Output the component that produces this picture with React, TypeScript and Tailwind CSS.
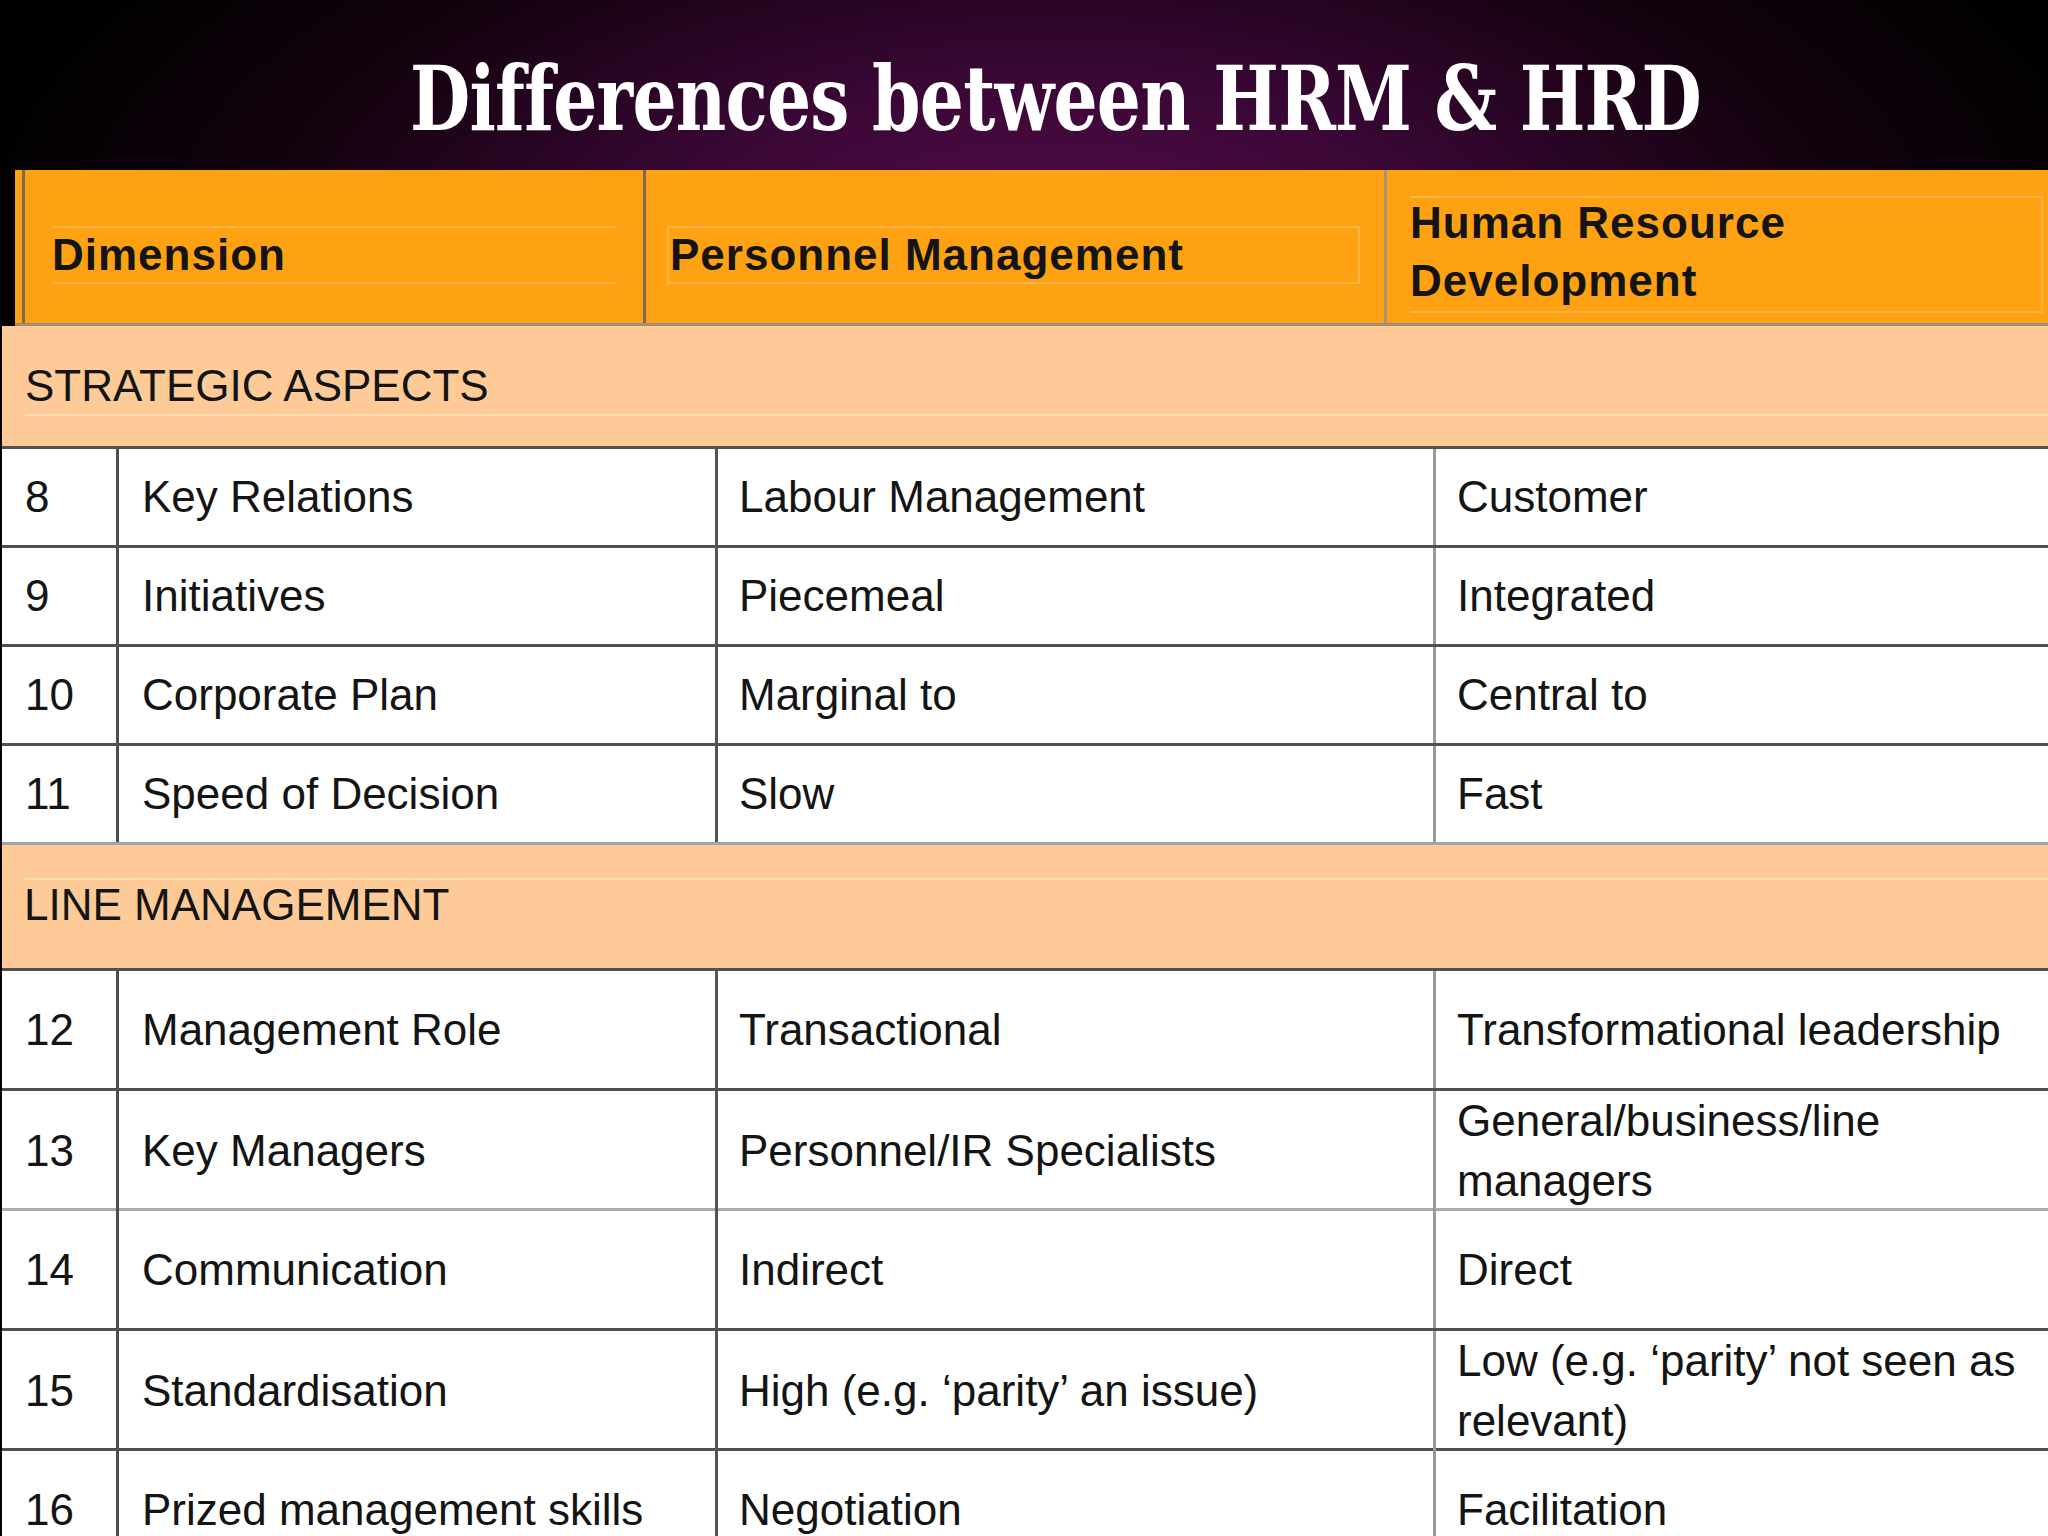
type Row = { n: string; dim: string; pm: string; hrd: string; line: string };

const strategic: Row[] = [
  { n: '8', dim: 'Key Relations', pm: 'Labour Management', hrd: 'Customer', line: 'border-[#505050]' },
  { n: '9', dim: 'Initiatives', pm: 'Piecemeal', hrd: 'Integrated', line: 'border-[#505050]' },
  { n: '10', dim: 'Corporate Plan', pm: 'Marginal to', hrd: 'Central to', line: 'border-[#505050]' },
  { n: '11', dim: 'Speed of Decision', pm: 'Slow', hrd: 'Fast', line: 'border-[#a2a2a8]' },
];

const lineMgmt: Row[] = [
  { n: '12', dim: 'Management Role', pm: 'Transactional', hrd: 'Transformational leadership', line: 'border-[#505050]' },
  { n: '13', dim: 'Key Managers', pm: 'Personnel/IR Specialists', hrd: 'General/business/line managers', line: 'border-[#ababab]' },
  { n: '14', dim: 'Communication', pm: 'Indirect', hrd: 'Direct', line: 'border-[#505050]' },
  { n: '15', dim: 'Standardisation', pm: 'High (e.g. ‘parity’ an issue)', hrd: 'Low (e.g. ‘parity’ not seen as relevant)', line: 'border-[#505050]' },
  { n: '16', dim: 'Prized management skills', pm: 'Negotiation', hrd: 'Facilitation', line: 'border-[#505050]' },
];

function BodyRow({ row, h }: { row: Row; h: string }) {
  return (
    <div className={`grid grid-cols-[117px_599px_718px_1fr] bg-white border-b-[3px] ${row.line} ${h}`}>
      <div className="flex items-center pl-[23px] border-r-[3px] border-[#4d4d4d]">{row.n}</div>
      <div className="flex items-center pl-[23px] border-r-[3px] border-[#555]">{row.dim}</div>
      <div className="flex items-center pl-[21px] border-r-[3px] border-[#9a9a9a]">{row.pm}</div>
      <div className="flex items-center pl-[21px] pr-[20px]">{row.hrd}</div>
    </div>
  );
}

export default function App() {
  return (
    <div className="w-[2048px] h-[1536px] overflow-hidden flex flex-col bg-[radial-gradient(ellipse_1100px_520px_at_1050px_260px,#560d4c_0%,#3a0736_35%,#14020f_70%,#000_100%)]">
      <div className="h-[170px] shrink-0 flex justify-center pl-[62px]">
        <h1 className="mt-[54px] text-white text-[89px] leading-none font-bold tracking-[-1px] [transform:scaleX(0.78)] origin-center whitespace-nowrap [font-family:'DejaVu_Serif',serif]">
          Differences between HRM &amp; HRD
        </h1>
      </div>

      {/* header */}
      <div className="ml-[15px] h-[156px] shrink-0 flex bg-[#fea213] pl-[7px] border-b-[3px] border-[#a08e78] text-[44px] font-bold tracking-[1px] text-[#141414] [font-family:'Liberation_Sans',Arial,sans-serif]">
        <div className="w-[624px] border-l-[3px] border-r-[3px] border-l-[#7d6a52] border-r-[#7b6a55]">
          <div className="mt-[56px] mx-[27px] h-[58px] flex items-center border-y-2 border-[#ffb446] leading-[48px]">Dimension</div>
        </div>
        <div className="w-[741px] border-r-[3px] border-[#a3937f]">
          <div className="mt-[56px] ml-[21px] mr-[24px] h-[58px] flex items-center border-2 border-[#ffb446] pl-[1px] leading-[48px]">
            Personnel Management
          </div>
        </div>
        <div className="flex-1">
          <div className="mt-[26px] ml-[23px] mr-[5px] h-[117px] flex items-center border-y-2 border-r-2 border-[#ffb446] leading-[58px] pb-[6px]">
            <span>
              Human Resource
              <br />
              Development
            </span>
          </div>
        </div>
      </div>

      <div className="ml-[2px] flex flex-col text-[44px] text-[#141414] [font-family:'Liberation_Sans',Arial,sans-serif] leading-[60px]">
        <div className="h-[123px] shrink-0 bg-[#fdca98] border-b-[3px] border-[#505050] pl-[23px] pt-[35px]">
          <div className="leading-[50px] pb-[3px] border-b-2 border-[#ffe0b4]">STRATEGIC ASPECTS</div>
        </div>
        {strategic.map(r => (
          <BodyRow key={r.n} row={r} h="h-[99px]" />
        ))}
        <div className="h-[126px] shrink-0 bg-[#fdca98] border-b-[3px] border-[#505050] pl-[22px] pt-[33px]">
          <div className="leading-[50px] border-t-2 border-[#ffe0b4]">LINE MANAGEMENT</div>
        </div>
        {lineMgmt.map(r => (
          <BodyRow key={r.n} row={r} h="h-[120px]" />
        ))}
      </div>
    </div>
  );
}
